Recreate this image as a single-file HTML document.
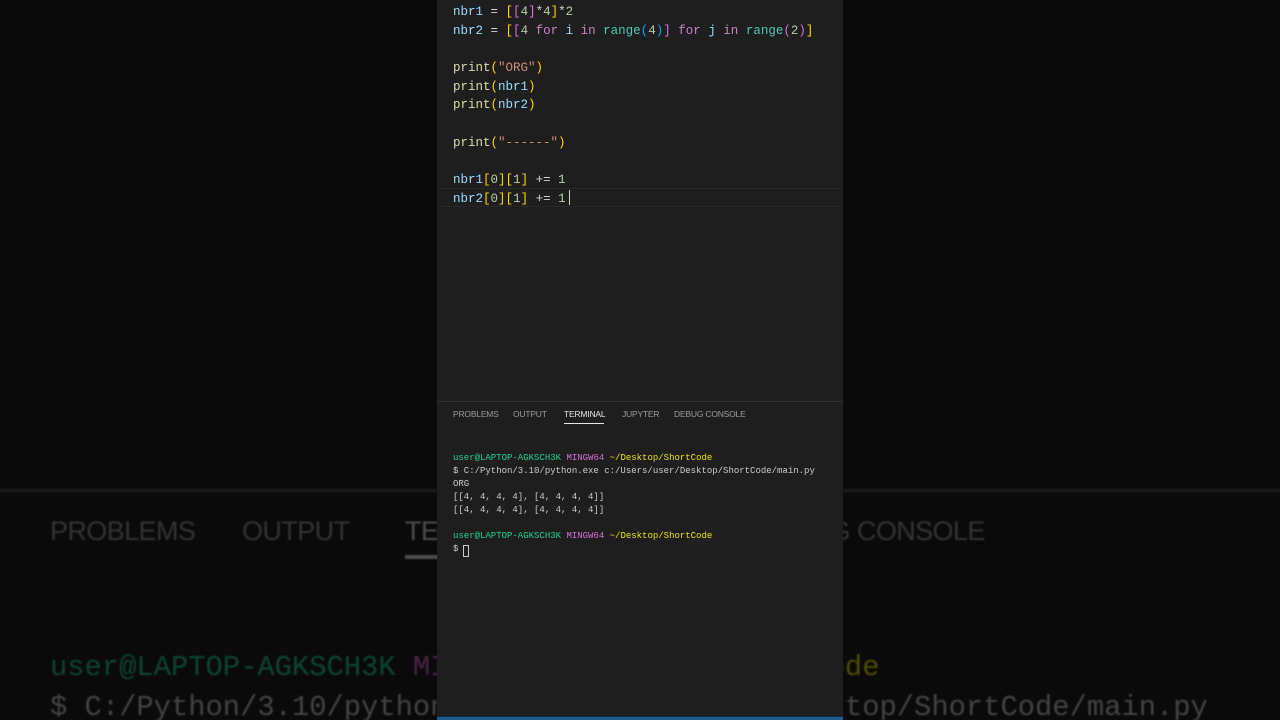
<!DOCTYPE html>
<html><head><meta charset="utf-8"><style>
*{margin:0;padding:0;box-sizing:border-box}
html,body{width:1280px;height:720px;overflow:hidden;background:#0e0e0e}
#root{position:relative;width:1280px;height:720px;overflow:hidden;background:#0e0e0e}
.bgl{position:absolute;left:0;top:0;width:1280px;height:720px;overflow:hidden;filter:blur(0.8px) brightness(0.33)}
.bt{position:absolute;white-space:pre;font-family:"Liberation Mono",monospace;font-size:28.8px;line-height:32px;color:#cccccc;overflow:hidden}
.btab{position:absolute;top:515px;font-family:"Liberation Sans",sans-serif;font-size:27px;line-height:32px;color:#9a9a9a;letter-spacing:-0.6px}
.t{position:absolute;white-space:pre;font-family:"Liberation Mono",monospace;font-size:9px;line-height:13px;color:#cccccc}
.tab{position:absolute;top:409px;font-family:"Liberation Sans",sans-serif;font-size:8.5px;color:#9a9a9a;letter-spacing:-0.2px}
.panel{position:absolute;left:437px;top:0;width:406px;height:720px;background:#1e1e1e;overflow:hidden}
.code{position:absolute;left:16px;top:3px;font-family:"Liberation Mono",monospace;font-size:12.5px;line-height:18.65px;white-space:pre;color:#9cdcfe}
.g{color:#4ec9b0}.m{color:#c586c0}.f{color:#dcdcaa}.s{color:#ce9178}.n{color:#b5cea8}.b1{color:#ffd700}.b2{color:#da70d6}.b3{color:#179fff}.w{color:#d4d4d4}
.tg{color:#23d18b}.tm{color:#d670d6}.ty{color:#e5e510}
</style></head><body><div id="root">
<div class="bgl">
  <div style="position:absolute;left:0;top:489px;width:1280px;height:3px;background:#555"></div>
  <div style="position:absolute;left:0;top:492px;width:1280px;height:228px;background:#1e1e1e"></div>
  <div style="position:absolute;left:0;top:0;width:1280px;height:489px;background:#1e1e1e"></div>
  <div class="btab" style="left:50px">PROBLEMS</div>
  <div class="btab" style="left:242px">OUTPUT</div>
  <div class="btab" style="left:405px;color:#e7e7e7">TERMINAL</div>
  <div style="position:absolute;left:405px;top:555px;width:128px;height:4px;background:#e7e7e7"></div>
  <div class="btab" style="left:590px">JUPYTER</div>
  <div class="btab" style="left:757px">DEBUG CONSOLE</div>
  <div class="bt" style="left:50px;top:652px;height:36px"><span class="tg">user@LAPTOP-AGKSCH3K</span> <span class="tm">MINGW64</span> <span class="ty">~/Desktop/ShortCode</span></div>
  <div class="bt" style="left:50px;top:692px;height:28px">$ C:/Python/3.10/python.exe c:/Users/user/Desktop/ShortCode/main.py</div>
</div>
<div class="panel">
  <div class="code"><span>nbr1</span><span class="w"> = </span><span class="b1">[</span><span class="b2">[</span><span class="n">4</span><span class="b2">]</span><span class="w">*</span><span class="n">4</span><span class="b1">]</span><span class="w">*</span><span class="n">2</span>
<span>nbr2</span><span class="w"> = </span><span class="b1">[</span><span class="b2">[</span><span class="n">4</span> <span class="m">for</span> i <span class="m">in</span> <span class="g">range</span><span class="b3">(</span><span class="n">4</span><span class="b3">)</span><span class="b2">]</span> <span class="m">for</span> j <span class="m">in</span> <span class="g">range</span><span class="b2">(</span><span class="n">2</span><span class="b2">)</span><span class="b1">]</span>

<span class="f">print</span><span class="b1">(</span><span class="s">"ORG"</span><span class="b1">)</span>
<span class="f">print</span><span class="b1">(</span>nbr1<span class="b1">)</span>
<span class="f">print</span><span class="b1">(</span>nbr2<span class="b1">)</span>

<span class="f">print</span><span class="b1">(</span><span class="s">"------"</span><span class="b1">)</span>

nbr1<span class="b1">[</span><span class="n">0</span><span class="b1">][</span><span class="n">1</span><span class="b1">]</span><span class="w"> += </span><span class="n">1</span>
nbr2<span class="b1">[</span><span class="n">0</span><span class="b1">][</span><span class="n">1</span><span class="b1">]</span><span class="w"> += </span><span class="n">1</span></div>
  <div style="position:absolute;left:0;top:188px;width:406px;height:19px;border-top:1px solid #282828;border-bottom:1px solid #282828"></div>
  <div style="position:absolute;left:132px;top:190px;width:1px;height:15px;background:#d0d0d0"></div>
  <div style="position:absolute;left:0;top:401px;width:406px;height:1px;background:#333"></div>
  <div class="tab" style="left:16px">PROBLEMS</div>
  <div class="tab" style="left:76px">OUTPUT</div>
  <div class="tab" style="left:127px;color:#e7e7e7">TERMINAL</div>
  <div style="position:absolute;left:127px;top:423px;width:40px;height:1px;background:#e7e7e7"></div>
  <div class="tab" style="left:185px">JUPYTER</div>
  <div class="tab" style="left:237px">DEBUG CONSOLE</div>
  <div class="t" style="left:16px;top:452px"><span class="tg">user@LAPTOP-AGKSCH3K</span> <span class="tm">MINGW64</span> <span class="ty">~/Desktop/ShortCode</span>
$ C:/Python/3.10/python.exe c:/Users/user/Desktop/ShortCode/main.py
ORG
[[4, 4, 4, 4], [4, 4, 4, 4]]
[[4, 4, 4, 4], [4, 4, 4, 4]]

<span class="tg">user@LAPTOP-AGKSCH3K</span> <span class="tm">MINGW64</span> <span class="ty">~/Desktop/ShortCode</span>
$ </div>
  <div style="position:absolute;left:26px;top:545px;width:6px;height:12px;border:1px solid #ccc"></div>
  <div style="position:absolute;left:0;top:716px;width:406px;height:4px;background:#1f5a8f;border-top:1px solid #0a2a44"></div>
</div>
</div></body></html>
